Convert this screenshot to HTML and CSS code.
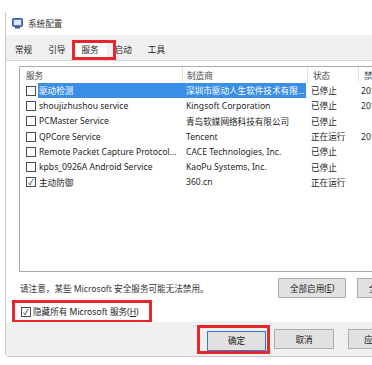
FILE: index.html
```html
<!DOCTYPE html>
<html>
<head>
    <title>系统配置</title>
    <link rel="stylesheet" href="styles.css">
</head>
<body>
    <div class="window">
        <div class="titlebar">
            <svg class="appicon" width="11" height="11" viewBox="0 0 11 11">
                <rect x="0.5" y="0.5" width="10" height="8" rx="1" fill="#5b7fc8" stroke="#3a5aa0"/>
                <rect x="2" y="2" width="7" height="5" fill="#dce8fa"/>
                <rect x="3" y="9" width="5" height="1.5" fill="#3a5aa0"/>
            </svg>
            <span>系统配置</span>
        </div>

        <div class="tabs">
            <div class="tab">常规</div>
            <div class="tab">引导</div>
            <div class="tab active">服务</div>
            <div class="tab">启动</div>
            <div class="tab">工具</div>
        </div>

        <div class="page">
            <div class="listbox">
                <div class="row head">
                    <div class="c-name">服务</div>
                    <div class="c-maker">制造商</div>
                    <div class="c-state">状态</div>
                    <div class="c-date">禁用日期</div>
                </div>
                <div class="row selected">
                    <div class="c-name"><span class="box"></span><span class="label">驱动检测</span></div>
                    <div class="c-maker">深圳市驱动人生软件技术有限...</div>
                    <div class="c-state">已停止</div>
                    <div class="c-date">2019/</div>
                </div>
                <div class="row">
                    <div class="c-name"><span class="box"></span><span class="label">shoujizhushou service</span></div>
                    <div class="c-maker">Kingsoft Corporation</div>
                    <div class="c-state">已停止</div>
                    <div class="c-date">2019/</div>
                </div>
                <div class="row">
                    <div class="c-name"><span class="box"></span><span class="label">PCMaster Service</span></div>
                    <div class="c-maker">青岛软媒网络科技有限公司</div>
                    <div class="c-state">已停止</div>
                    <div class="c-date"></div>
                </div>
                <div class="row">
                    <div class="c-name"><span class="box"></span><span class="label">QPCore Service</span></div>
                    <div class="c-maker">Tencent</div>
                    <div class="c-state">正在运行</div>
                    <div class="c-date">2019/</div>
                </div>
                <div class="row">
                    <div class="c-name"><span class="box"></span><span class="label">Remote Packet Capture Protocol...</span></div>
                    <div class="c-maker">CACE Technologies, Inc.</div>
                    <div class="c-state">已停止</div>
                    <div class="c-date"></div>
                </div>
                <div class="row">
                    <div class="c-name"><span class="box"></span><span class="label">kpbs_0926A Android Service</span></div>
                    <div class="c-maker">KaoPu Systems, Inc.</div>
                    <div class="c-state">已停止</div>
                    <div class="c-date"></div>
                </div>
                <div class="row">
                    <div class="c-name"><span class="box checked">&#10003;</span><span class="label">主动防御</span></div>
                    <div class="c-maker">360.cn</div>
                    <div class="c-state">正在运行</div>
                    <div class="c-date"></div>
                </div>
            </div>

            <div class="noteline">
                <span class="note">请注意，某些 Microsoft 安全服务可能无法禁用。</span>
                <div class="btn enable">全部启用(<u>E</u>)</div>
                <div class="btn">全部禁用(<u>D</u>)</div>
            </div>

            <div class="hide hl">
                <span class="box checked">&#10003;</span>
                <span>隐藏所有 Microsoft 服务(<u>H</u>)</span>
            </div>
        </div>

        <div class="footer">
            <div class="okwrap hl"><div class="btn ok">确定</div></div>
            <div class="btn cancel">取消</div>
            <div class="btn apply">应用(<u>A</u>)</div>
        </div>
    </div>
</body>
</html>
```

FILE: styles.css
```css
body{
    margin: 0;
    background-color: #ffffff;
    font-family: "Noto Sans", "Noto Sans CJK SC", sans-serif;
    font-size: 8.6px;
    color: #1e1e1e;
    overflow: hidden;
}
.window{
    margin: 12px 0 0 5px;
    width: 420px;
    height: 344px;
    border-left: 1px solid #c9c9c9;
    border-bottom: 1px solid #c9c9c9;
    border-radius: 0 0 0 4px;
    display: flex;
    flex-direction: column;
    background: #f0f0f0;
}
.titlebar{
    height: 23px;
    flex-shrink: 0;
    display: flex;
    align-items: center;
    gap: 5px;
    padding-left: 6px;
    background: #ffffff;
    color: #333;
}
.tabs{
    height: 25px;
    flex-shrink: 0;
    display: flex;
    align-items: flex-end;
    padding-left: 1px;
    background: #f0f0f0;
    border-bottom: 1px solid #d9d9d9;
}
.tab{
    height: 19px;
    line-height: 19px;
    padding: 0 8px;
    color: #222;
}
.tab.active{
    position: relative;
    background: #ffffff;
}
.tab.active::after{
    content: "";
    position: absolute;
    left: -1px;
    right: -9px;
    top: -1px;
    bottom: 0;
    border: 3px solid #e8262b;
}
.page{
    height: 261px;
    flex-shrink: 0;
    background: #ffffff;
    padding: 5px 0 0 13px;
    box-sizing: border-box;
}
.listbox{
    height: 206px;
    border: 1px solid #a8a8a8;
    border-right: none;
    box-sizing: border-box;
}
.row{
    height: 15.3px;
    display: flex;
    align-items: center;
    white-space: nowrap;
}
.row.head{
    height: 16px;
    color: #4a4a4a;
}
.head div{
    border-right: 1px solid #e2e2e2;
    height: 100%;
    display: flex;
    align-items: center;
}
.c-name{
    width: 156px;
    padding-left: 6px;
    display: flex;
    align-items: center;
    height: 100%;
}
.c-maker{
    width: 120px;
    padding-left: 4px;
    height: 100%;
    display: flex;
    align-items: center;
}
.c-state{
    width: 45px;
    padding-left: 5px;
    height: 100%;
    display: flex;
    align-items: center;
}
.c-date{
    padding-left: 5px;
}
.box{
    width: 8px;
    height: 8px;
    border: 1px solid #4b4b4b;
    background: #fff;
    margin-right: 2px;
    font-size: 8px;
    line-height: 8px;
    text-align: center;
    color: #222;
    flex-shrink: 0;
}
.label{
    height: 100%;
    display: flex;
    align-items: center;
    padding: 0 1px;
}
.selected .label{
    flex: 1;
    background: #3a8ee6;
    color: #ffffff;
}
.selected .c-maker{
    background: #3a8ee6;
    color: #ffffff;
}
.noteline{
    display: flex;
    align-items: center;
    height: 20px;
    margin-top: 6px;
}
.note{
    width: 263px;
    padding-left: 1px;
    color: #333;
}
.btn{
    height: 20px;
    box-sizing: border-box;
    border: 1px solid #adadad;
    background: #e1e1e1;
    display: flex;
    align-items: center;
    justify-content: center;
    white-space: nowrap;
    color: #222;
}
.enable{
    width: 70px;
    margin-right: 11px;
}
.noteline .btn:last-child{
    width: 70px;
}
.hide{
    display: flex;
    align-items: center;
    margin: 2px 0 0 -7px;
    width: 140px;
    height: 23px;
    box-sizing: border-box;
    padding-left: 6px;
    color: #222;
}
.hl{
    border: 3px solid #e8262b;
}
.footer{
    flex: 1;
    display: flex;
    align-items: center;
    padding-left: 191px;
    background: #f0f0f0;
}
.okwrap{
    padding: 3px 1px 0 7px;
    margin-right: 4px;
}
.ok{
    width: 59px;
    border: 1px solid #2a7ad6;
}
.cancel{
    width: 60px;
    margin-right: 14px;
}
.apply{
    width: 60px;
}
```
